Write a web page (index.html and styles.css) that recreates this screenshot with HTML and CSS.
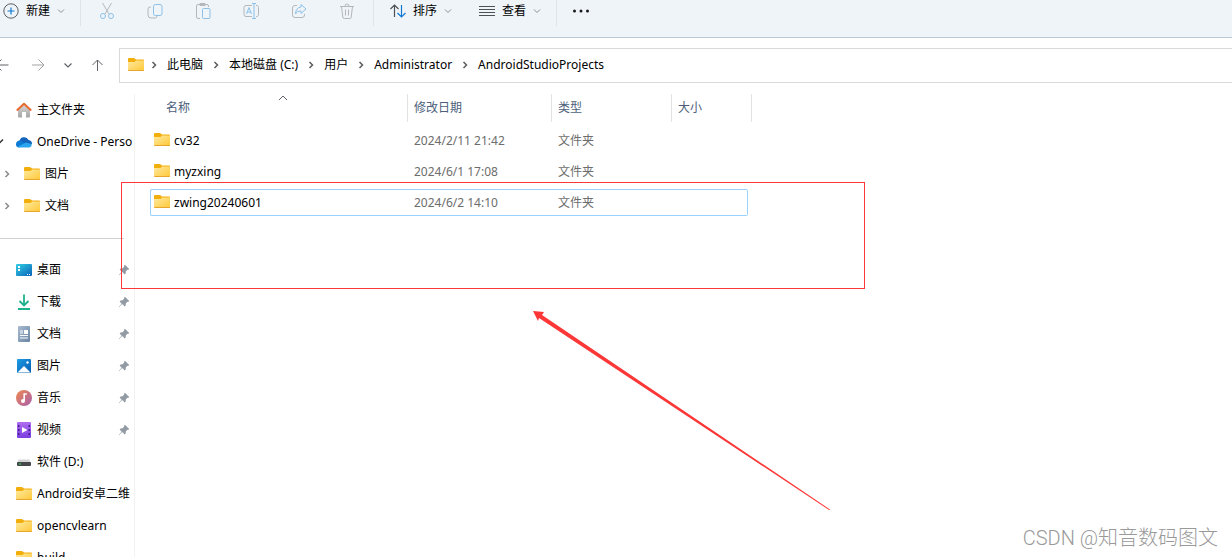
FILE: index.html
```html
<!DOCTYPE html>
<html lang="zh-CN">
<head>
  <meta charset="UTF-8">
  <meta name="viewport" content="width=device-width, initial-scale=1">
  <title>AndroidStudioProjects</title>
  <link rel="stylesheet" href="styles.css">
</head>
<body>
  <!-- Shared icons -->
  <svg class="defs" aria-hidden="true">
    <defs>
      <linearGradient id="g-folder" x1="0" y1="0" x2="1" y2="1">
        <stop offset="0" stop-color="#ffe8a0"/><stop offset="1" stop-color="#ffc937"/>
      </linearGradient>
      <linearGradient id="g-desktop" x1="0" y1="0" x2="1" y2="1">
        <stop offset="0" stop-color="#32cfe4"/><stop offset="1" stop-color="#0a62b8"/>
      </linearGradient>
      <linearGradient id="g-doc" x1="0" y1="0" x2="1" y2="1">
        <stop offset="0" stop-color="#a9bbd0"/><stop offset="1" stop-color="#6984a3"/>
      </linearGradient>
      <linearGradient id="g-pic" x1="0" y1="0" x2="1" y2="1">
        <stop offset="0" stop-color="#1c9de8"/><stop offset="1" stop-color="#0a5cad"/>
      </linearGradient>
      <linearGradient id="g-music" x1="0" y1="0" x2="1" y2="1">
        <stop offset="0" stop-color="#f0884f"/><stop offset="1" stop-color="#a75fae"/>
      </linearGradient>
      <linearGradient id="g-video" x1="0" y1="0" x2="0" y2="1">
        <stop offset="0" stop-color="#b06bf0"/><stop offset="1" stop-color="#7b3fe0"/>
      </linearGradient>
      <linearGradient id="g-home" x1="0" y1="0" x2="0" y2="1">
        <stop offset="0" stop-color="#d9d9d9"/><stop offset="1" stop-color="#a5a5a5"/>
      </linearGradient>
      <symbol id="folder" viewBox="0 1 16 16">
        <path d="M0 3a1 1 0 0 1 1-1h5l2 1.500h7a1 1 0 0 1 1 1V8H0z" fill="#f2ae0a"/>
        <path d="M0 6h6.500L8 4.500h8V14a1 1 0 0 1-1 1H1a1 1 0 0 1-1-1z" fill="url(#g-folder)"/>
        <path d="M0 14h16a1 1 0 0 1-1 1H1a1 1 0 0 1-1-1z" fill="#e9a52c"/>
      </symbol>
      <symbol id="down" viewBox="0 0 8 8"><path d="M1 2.500 4 5.500l3-3" fill="none" stroke="#8b8f93"/></symbol>
      <symbol id="right" viewBox="0 0 8 8"><path d="M2.500 1 5.500 4l-3 3" fill="none" stroke="currentColor" stroke-width="1.500"/></symbol>
      <symbol id="pin" viewBox="0 0 12 12">
        <path d="M7 .8 11.200 5l-1 1-.8-.2L7.800 7.500l-.1 2-1 1L4.300 8 1 11.200.7 11l3-3.300L1.600 5.400l1-1 2-.1L6.300 2.600 6 1.800z" fill="#929ba4"/>
      </symbol>
    </defs>
  </svg>

  <!-- Command bar -->
  <header class="toolbar">
    <button class="tool tool-new">
      <svg class="icon" viewBox="0 0 16 16" fill="none"><circle cx="8" cy="8" r="7.200" stroke="#5a5e63"/><path d="M8 4.500v7M4.500 8h7" stroke="#0f78d4" stroke-width="1.200"/></svg>
      新建
      <svg class="chev"><use href="#down"/></svg>
    </button>
    <span class="divider"></span>
    <button class="tool tool-icon" aria-label="剪切">
      <svg class="icon" viewBox="0 0 16 16" fill="none"><path d="M3.500 0 10 11M12.500 0 6 11" stroke="#b4b8bc"/><circle cx="4" cy="13" r="2.500" stroke="#8cc0e8"/><circle cx="12" cy="13" r="2.500" stroke="#8cc0e8"/></svg>
    </button>
    <button class="tool tool-icon" aria-label="复制">
      <svg class="icon" viewBox="0 0 16 16" fill="none"><path d="M4 4H3a2 2 0 0 0-2 2v6a3 3 0 0 0 3 3h4a2 2 0 0 0 2-2" stroke="#b4b8bc"/><rect x="6.500" y="1.500" width="8.500" height="11" rx="2" stroke="#8cc0e8"/></svg>
    </button>
    <button class="tool tool-icon" aria-label="粘贴">
      <svg class="icon" viewBox="0 0 16 16" fill="none"><path d="M5 15.500H3a1.500 1.500 0 0 1-1.500-1.500V3A1.500 1.500 0 0 1 3 1.500h9A1.500 1.500 0 0 1 13.500 3v1M5 .5h5v2H5z" stroke="#b4b8bc"/><rect x="7.500" y="5.500" width="7.500" height="10" rx="1" stroke="#8cc0e8"/></svg>
    </button>
    <button class="tool tool-icon" aria-label="重命名">
      <svg class="icon" viewBox="0 0 16 16" fill="none"><path d="M9 2.500H3a2 2 0 0 0-2 2v7a2 2 0 0 0 2 2h6M13 2.500a2 2 0 0 1 2.500 2v7a2 2 0 0 1-2.500 2" stroke="#b4b8bc"/><path d="M9 .5h4M9 15.500h4M11 .5v15M3.500 11 6 4.500 8.500 11M4.300 9h3.400" stroke="#8cc0e8"/></svg>
    </button>
    <button class="tool tool-icon" aria-label="共享">
      <svg class="icon" viewBox="0 0 16 16" fill="none"><path d="M6 2.500H4a2.500 2.500 0 0 0-2.500 2.500v7A2.500 2.500 0 0 0 4 14.500h7a2.500 2.500 0 0 0 2.500-2.500v-1" stroke="#b4b8bc"/><path d="M10 1.500 15 6l-5 4.500V8C7 8 5.500 9 4.500 11 4.500 7 6.500 4.500 10 4z" stroke="#8cc0e8" stroke-linejoin="round"/></svg>
    </button>
    <button class="tool tool-icon" aria-label="删除">
      <svg class="icon" viewBox="0 0 16 16" fill="none" stroke="#b4b8bc"><path d="M1 3.500h14M6 3a2 2 0 0 1 4 0M2.500 3.500 3.800 14a1.500 1.500 0 0 0 1.500 1.500h5.400a1.500 1.500 0 0 0 1.500-1.500l1.300-10.500M6.500 6.500v6M9.500 6.500v6"/></svg>
    </button>
    <span class="divider"></span>
    <button class="tool">
      <svg class="icon" viewBox="0 0 16 16" fill="none"><path d="M4.500 14V2M.5 6l4-4 4 4" stroke="#4c5156" stroke-width="1.200"/><path d="M11.500 2v12M7.500 10l4 4 4-4" stroke="#0f78d4" stroke-width="1.200"/></svg>
      排序
      <svg class="chev"><use href="#down"/></svg>
    </button>
    <button class="tool">
      <svg class="icon" viewBox="0 0 16 16"><path d="M0 3.500h16M0 6.500h16M0 9.500h16M0 12.500h16" stroke="#4c5156"/></svg>
      查看
      <svg class="chev"><use href="#down"/></svg>
    </button>
    <span class="divider"></span>
    <button class="tool tool-more" aria-label="更多">
      <svg class="icon" viewBox="0 0 16 16" fill="#1a1a1a"><circle cx="1.500" cy="8" r="1.500"/><circle cx="8" cy="8" r="1.500"/><circle cx="14.500" cy="8" r="1.500"/></svg>
    </button>
  </header>

  <!-- Navigation and address -->
  <div class="navbar">
    <nav class="history">
      <button aria-label="后退"><svg class="icon" viewBox="0 0 16 16"><path d="M14.500 8H2M7.500 2.500 2 8l5.500 5.500" stroke="#5f6367"/></svg></button>
      <button aria-label="前进"><svg class="icon" viewBox="0 0 16 16"><path d="M2 8h12M8.500 2.500 14 8l-5.500 5.500" stroke="#a0a3a6"/></svg></button>
      <button class="recent" aria-label="最近的位置"><svg class="icon" viewBox="0 0 16 16"><path d="M4.500 6.500 8 10l3.500-3.500" stroke="#5f6367" stroke-width="1.200"/></svg></button>
      <button aria-label="向上"><svg class="icon" viewBox="0 0 16 16"><path d="M7.500 14V3M2.500 8l5-5 5 5" stroke="#5f6367"/></svg></button>
    </nav>
    <div class="address">
      <svg class="icon"><use href="#folder"/></svg>
      <svg class="sep"><use href="#right"/></svg>
      <a href="#">此电脑</a>
      <svg class="sep"><use href="#right"/></svg>
      <a href="#">本地磁盘 (C:)</a>
      <svg class="sep"><use href="#right"/></svg>
      <a href="#">用户</a>
      <svg class="sep"><use href="#right"/></svg>
      <a href="#">Administrator</a>
      <svg class="sep"><use href="#right"/></svg>
      <a href="#">AndroidStudioProjects</a>
    </div>
  </div>

  <main class="content">
    <!-- Navigation pane -->
    <aside class="sidebar">
      <a class="item" href="#">
        <svg class="icon" viewBox="0 0 16 16"><path d="M2 7 8 2l6 5v7.500a1 1 0 0 1-1 1h-3V10H6v5.500H3a1 1 0 0 1-1-1z" fill="url(#g-home)"/><path d="M.8 8.500 8 1.800l7.200 6.700" fill="none" stroke="#e8692c" stroke-width="2" stroke-linejoin="round"/></svg>
        <span>主文件夹</span>
      </a>
      <a class="item" href="#">
        <svg class="twist open" viewBox="0 0 8 8"><path d="M0 2.500 3 5.500l4-4" fill="none" stroke="#333" stroke-width="1.500"/></svg>
        <svg class="icon" viewBox="0 0 16 16"><path d="M3.500 7A4.800 4.800 0 0 1 12.500 6a4 4 0 0 1 3.500 4L8 11z" fill="#1464bd"/><path d="M0 10a3.500 3.500 0 0 1 4.500-3.400L11 11l-8 2.500A3.400 3.400 0 0 1 0 10z" fill="#0d7bd5"/><path d="M1.500 12.700 10 8.500l5.500 1.500a2.700 2.700 0 0 1-2.200 3.500H3.500a3 3 0 0 1-2-.8z" fill="#2aa6ee"/></svg>
        <span>OneDrive - Perso</span>
      </a>
      <a class="item child" href="#">
        <svg class="twist"><use href="#right"/></svg>
        <svg class="icon"><use href="#folder"/></svg>
        <span>图片</span>
      </a>
      <a class="item child" href="#">
        <svg class="twist"><use href="#right"/></svg>
        <svg class="icon"><use href="#folder"/></svg>
        <span>文档</span>
      </a>
      <hr class="split">
      <a class="item" href="#">
        <svg class="icon" viewBox="0 0 16 16"><rect y="2" width="16" height="12" rx="1" fill="url(#g-desktop)"/><path d="M2 4h2v2H2zM2 7h2v2H2zM11 12h1v1h-1zM13 12h1v1h-1z" fill="#fff"/></svg>
        <span>桌面</span>
        <svg class="pin"><use href="#pin"/></svg>
      </a>
      <a class="item" href="#">
        <svg class="icon" viewBox="0 0 16 16"><path d="M8 .5v11M3.500 7 8 11.500 12.500 7M2 15h12" fill="none" stroke="#1cb08d" stroke-width="1.800"/></svg>
        <span>下载</span>
        <svg class="pin"><use href="#pin"/></svg>
      </a>
      <a class="item" href="#">
        <svg class="icon" viewBox="0 0 16 16"><rect x="2" width="12" height="16" rx="1" fill="url(#g-doc)"/><path d="M4 5h3M4 7h3M4 9.500h8M4 12h8" stroke="#fff"/><path d="M8 4h4v4H8z" fill="#fff"/></svg>
        <span>文档</span>
        <svg class="pin"><use href="#pin"/></svg>
      </a>
      <a class="item" href="#">
        <svg class="icon" viewBox="0 0 16 16"><rect x="1" y="1" width="14" height="14" rx="1" fill="url(#g-pic)"/><path d="M1.500 14.500 8 8l6.500 6.500z" fill="#fff"/><circle cx="11.500" cy="4.500" r="1.200" fill="#fff"/></svg>
        <span>图片</span>
        <svg class="pin"><use href="#pin"/></svg>
      </a>
      <a class="item" href="#">
        <svg class="icon" viewBox="0 0 16 16"><circle cx="8" cy="8" r="8" fill="url(#g-music)"/><circle cx="7" cy="11" r="2" fill="#fff"/><path d="M8.200 11V4h2.600" fill="none" stroke="#fff" stroke-width="1.600"/></svg>
        <span>音乐</span>
        <svg class="pin"><use href="#pin"/></svg>
      </a>
      <a class="item" href="#">
        <svg class="icon" viewBox="0 0 16 16"><rect x="1" width="14" height="16" rx="1" fill="url(#g-video)"/><path d="M2 3h1.500v2H2zM2 7h1.500v2H2zM2 11h1.500v2H2zM12.500 3H14v2h-1.500zM12.500 7H14v2h-1.500zM12.500 11H14v2h-1.500z" fill="#40208c"/><path d="m6 5 5.500 3L6 11z" fill="#fff"/></svg>
        <span>视频</span>
        <svg class="pin"><use href="#pin"/></svg>
      </a>
      <a class="item" href="#">
        <svg class="icon" viewBox="0 0 16 16"><path d="M3 5.500h10L15 9H1z" fill="#d2d4d6"/><rect x="1" y="8" width="14" height="4" rx="1" fill="#45484b"/><path d="M3 9.500h2v1H3z" fill="#35e05a"/></svg>
        <span>软件 (D:)</span>
      </a>
      <a class="item" href="#">
        <svg class="icon"><use href="#folder"/></svg>
        <span>Android安卓二维</span>
      </a>
      <a class="item" href="#">
        <svg class="icon"><use href="#folder"/></svg>
        <span>opencvlearn</span>
      </a>
      <a class="item" href="#">
        <svg class="icon"><use href="#folder"/></svg>
        <span>build</span>
      </a>
    </aside>

    <!-- File list -->
    <section class="files">
      <table>
        <thead>
          <tr>
            <th class="col-name"><button>名称<svg class="caret" viewBox="0 0 10 6"><path d="M1 5l4-4 4 4" fill="none" stroke="#5f6367"/></svg></button></th>
            <th class="col-date"><button>修改日期</button></th>
            <th class="col-type"><button>类型</button></th>
            <th class="col-size"><button>大小</button></th>
          </tr>
        </thead>
        <tbody>
          <tr>
            <td><a class="name" href="#"><svg class="icon"><use href="#folder"/></svg>cv32</a></td>
            <td>2024/2/11 21:42</td>
            <td>文件夹</td>
            <td></td>
          </tr>
          <tr>
            <td><a class="name" href="#"><svg class="icon"><use href="#folder"/></svg>myzxing</a></td>
            <td>2024/6/1 17:08</td>
            <td>文件夹</td>
            <td></td>
          </tr>
          <tr class="focused">
            <td><a class="name" href="#"><svg class="icon"><use href="#folder"/></svg>zwing20240601</a></td>
            <td>2024/6/2 14:10</td>
            <td>文件夹</td>
            <td></td>
          </tr>
        </tbody>
      </table>
    </section>
  </main>

  <!-- Marks drawn over the window -->
  <div class="mark-box"></div>
  <svg class="mark-arrow" viewBox="0 0 298 200"><path d="M0 0 11 1 9 4 297 198.500 296.500 199.300 6 7 5 10z" fill="#fb3737"/></svg>
  <div class="watermark">CSDN @知音数码图文</div>
</body>
</html>
```
FILE: styles.css
```css
* {
  box-sizing: border-box;
}
body {
  margin: 0;
  height: 100vh;
  display: flex;
  flex-direction: column;
  position: relative;
  overflow: hidden;
  background: #fff;
  color: #000;
  font: 12px/16px "Noto Sans", "Noto Sans CJK SC", sans-serif;
}
a {
  color: inherit;
  text-decoration: none;
}
button {
  padding: 0;
  border: none;
  background: none;
  color: inherit;
  font: inherit;
}
.defs {
  position: absolute;
  width: 0;
  height: 0;
}
.icon {
  flex: none;
  width: 16px;
  height: 16px;
}

/* Command bar */
.toolbar {
  flex: none;
  display: flex;
  align-items: flex-start;
  height: 38px;
  background: #eff4f9;
  border-bottom: 1px solid #b9c9d6;
}
.tool {
  display: flex;
  align-items: center;
  gap: 7px;
  height: 21px;
  padding: 0 13px 0 14px;
  white-space: nowrap;
}
.tool-new {
  padding-left: 3px;
}
.tool-icon,
.tool-more {
  justify-content: center;
  width: 48px;
  padding: 0;
}
.tool-more {
  width: 44px;
}
.chev {
  width: 8px;
  height: 8px;
}
.divider {
  width: 1px;
  height: 26px;
  margin: 0 2px;
  background: #dfe3e7;
}

/* Navigation and address */
.navbar {
  flex: none;
  display: flex;
  padding-top: 10px;
}
.history {
  display: flex;
  width: 135px;
  margin-left: -16px;
  padding-bottom: 2px;
}
.history button {
  display: flex;
  align-items: center;
  justify-content: center;
  width: 36px;
}
.history .recent {
  width: 24px;
}
.history path {
  fill: none;
}
.address {
  flex: 1;
  display: flex;
  align-items: center;
  height: 35px;
  padding: 0 0 2px 8px;
  border: 1px solid #d9d9d9;
  border-right: none;
  white-space: nowrap;
}
.address .icon {
  margin-right: -3px;
}
.sep {
  width: 8px;
  height: 8px;
  margin: 0 9px;
  color: #5c5c5c;
}

/* Navigation pane */
.content {
  flex: 1;
  display: flex;
  min-height: 0;
  padding-top: 11px;
}
.sidebar {
  flex: none;
  width: 135px;
  padding-right: 1px;
  overflow: hidden;
  border-right: 1px solid #f2f2f2;
}
.item {
  display: flex;
  align-items: center;
  gap: 5px;
  position: relative;
  height: 32px;
  padding-left: 16px;
  white-space: nowrap;
}
.child {
  padding-left: 24px;
}
.twist {
  position: absolute;
  left: 3px;
  width: 8px;
  height: 10px;
  color: #8a8a8a;
}
.twist.open {
  left: -4px;
}
.split {
  height: 1px;
  margin: 16px 9px 15px 0;
  border: none;
  background: #d0d0d0;
}
.pin {
  width: 12px;
  height: 12px;
  margin: 0 3px 0 auto;
}

/* File list */
.files {
  flex: 1;
  margin-top: -4px;
  padding-left: 15px;
}
table {
  width: 598px;
  table-layout: fixed;
  border-collapse: separate;
  border-spacing: 0 4px;
}
.col-name {
  width: 258px;
}
.col-date {
  width: 144px;
}
.col-type {
  width: 120px;
}
th {
  position: relative;
  height: 29px;
  padding: 0;
  color: #4c607a;
  font-weight: normal;
  text-align: left;
}
th::after {
  content: "";
  position: absolute;
  top: 0;
  right: 0;
  width: 1px;
  height: 28px;
  background: #e2e2e2;
}
.col-size::after {
  right: -4px;
}
th button {
  display: block;
  width: 100%;
  height: 28px;
  padding: 0 0 2px 6px;
  text-align: left;
}
.col-name {
  padding-left: 8px;
}
.col-name button {
  position: relative;
  padding-left: 8px;
}
.caret {
  position: absolute;
  top: 0;
  left: 50%;
  width: 10px;
  height: 6px;
  margin-left: -5px;
}
td {
  height: 27px;
  padding: 0 6px;
  border: 1px solid transparent;
  border-width: 1px 0;
  color: #6d6d6d;
}
td:first-child {
  padding-left: 3px;
  border-left-width: 1px;
}
td:last-child {
  border-right-width: 1px;
}
.focused td {
  border-color: #99d1ff;
}
.focused td:first-child {
  border-radius: 2px 0 0 2px;
}
.focused td:last-child {
  border-radius: 0 2px 2px 0;
}
.name {
  display: flex;
  align-items: center;
  gap: 4px;
  color: #000;
}
.name .icon {
  margin-bottom: 2px;
}

/* Marks */
.mark-box {
  position: absolute;
  left: 121px;
  top: 182px;
  width: 744px;
  height: 107px;
  border: 1px solid #fb3737;
}
.mark-arrow {
  position: absolute;
  left: 533px;
  top: 311px;
  width: 298px;
  height: 200px;
}
.watermark {
  position: absolute;
  right: 14px;
  bottom: 7px;
  color: #999;
  font: 300 20px/24px Roboto, "Noto Sans CJK SC", sans-serif;
}
```
